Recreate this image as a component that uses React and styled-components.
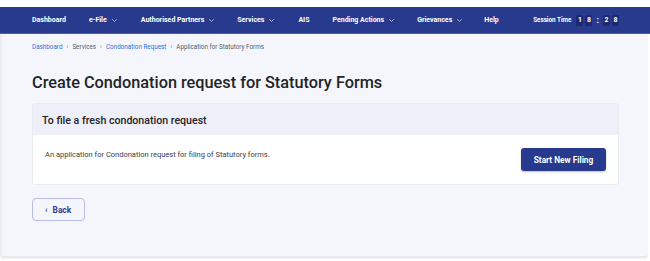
import styled, { createGlobalStyle } from 'styled-components';

const GlobalStyle = createGlobalStyle`
    html, body {
        margin: 0;
        padding: 0;
        background: #ffffff;
        font-family: Roboto, "Noto Sans", Arial, sans-serif;
    }
    * {
        box-sizing: border-box;
    }
`;

const Page = styled.div`
    width: 650px;
    height: 261px;
    padding-top: 7px;
    background: #ffffff;
    overflow: hidden;
`;

const NavBar = styled.nav`
    display: flex;
    align-items: center;
    height: 27px;
    padding: 0 31px 0 32px;
    background: #283a8e;
    border-bottom: 1px solid #4d5ba3;
`;

const NavItem = styled.span`
    display: flex;
    align-items: center;
    gap: 5px;
    margin-right: ${(p) => p.gap}px;
    color: #ffffff;
    font-size: 7px;
    font-weight: 700;
    white-space: nowrap;
`;

const Caret = styled.svg`
    width: 5px;
    height: 3px;
    opacity: 0.75;
`;

const Session = styled.div`
    display: flex;
    align-items: center;
    gap: 2px;
    margin-left: auto;
    color: #ffffff;
    font-size: 6.3px;
    font-weight: 700;
`;

const SessionLabel = styled.span`
    margin-right: 3px;
`;

const Digit = styled.span`
    display: inline-flex;
    align-items: center;
    justify-content: center;
    width: 7px;
    height: 11px;
    background: #1d2a73;
    border-radius: 1px;
    font-size: 7px;
`;

const Colon = styled.span`
    padding: 0 2px;
    font-size: 9px;
    line-height: 9px;
`;

const Content = styled.main`
    height: 224px;
    margin-right: 2px;
    padding: 8px 30px 0 32px;
    background: #f5f6fb;
    border-left: 2px solid #eceef4;
    border-bottom: 2px solid #e6e8ef;
    border-bottom-left-radius: 4px;
    border-bottom-right-radius: 4px;
    box-shadow: 0 1px 2px rgba(0, 0, 0, 0.06);
`;

const Crumbs = styled.div`
    display: flex;
    align-items: center;
    gap: 3px;
    height: 10px;
    margin-left: -2px;
    font-size: 6.3px;
    color: #555a66;
`;

const CrumbLink = styled.a`
    color: #2f6fd6;
    text-decoration: none;
`;

const Sep = styled.span`
    color: #777;
    padding: 0 1px;
`;

const Title = styled.h1`
    margin: 21px 0 10px -2px;
    font-size: 16.3px;
    line-height: 20px;
    font-weight: 500;
    color: #222428;
`;

const Card = styled.section`
    width: 587px;
    margin-left: -2px;
    border: 1px solid #e9ebf2;
    border-radius: 3px;
    background: #ffffff;
    overflow: hidden;
`;

const CardHead = styled.div`
    display: flex;
    align-items: center;
    height: 31px;
    padding: 1px 9px 0;
    background: #eeeff8;
    font-size: 10.6px;
    font-weight: 500;
    color: #222428;
`;

const CardBody = styled.div`
    display: flex;
    align-items: center;
    justify-content: space-between;
    height: 49px;
    padding: 0 12px 0 12px;
`;

const Desc = styled.p`
    margin: 0 0 10px;
    font-size: 7.5px;
    color: #3a3d46;
`;

const PrimaryButton = styled.button`
    width: 85px;
    height: 23px;
    border: none;
    border-radius: 3px;
    background: #283a8e;
    color: #ffffff;
    font-family: inherit;
    font-size: 8.3px;
    font-weight: 700;
    box-shadow: 0 1px 2px rgba(0, 0, 0, 0.25);
`;

const BackButton = styled.button`
    display: flex;
    align-items: center;
    gap: 5px;
    width: 53px;
    height: 23px;
    margin: 13px 0 0 -2px;
    padding: 0 0 0 12px;
    border: 1px solid #b7bde4;
    border-radius: 4px;
    background: transparent;
    color: #2f3c8f;
    font-family: inherit;
    font-size: 8.3px;
    font-weight: 700;
`;

const navItems = [
    { label: 'Dashboard', gap: 23 },
    { label: 'e-File', caret: true, gap: 24 },
    { label: 'Authorised Partners', caret: true, gap: 23 },
    { label: 'Services', caret: true, gap: 24 },
    { label: 'AIS', gap: 23 },
    { label: 'Pending Actions', caret: true, gap: 23 },
    { label: 'Grievances', caret: true, gap: 22 },
    { label: 'Help', gap: 0 },
];

function ChevronDown() {
    return (
        <Caret viewBox="0 0 10 6" fill="none">
            <path d="M1 1l4 4 4-4" stroke="#ffffff" strokeWidth="1.6" strokeLinecap="round" strokeLinejoin="round" />
        </Caret>
    );
}

export default function App() {
    return (
        <Page>
            <GlobalStyle />
            <NavBar>
                {navItems.map((item) => (
                    <NavItem key={item.label} gap={item.gap}>
                        {item.label}
                        {item.caret && <ChevronDown />}
                    </NavItem>
                ))}
                <Session>
                    <SessionLabel>Session Time</SessionLabel>
                    <Digit>1</Digit>
                    <Digit>8</Digit>
                    <Colon>:</Colon>
                    <Digit>2</Digit>
                    <Digit>8</Digit>
                </Session>
            </NavBar>
            <Content>
                <Crumbs>
                    <CrumbLink href="#">Dashboard</CrumbLink>
                    <Sep>›</Sep>
                    <span>Services</span>
                    <Sep>›</Sep>
                    <CrumbLink href="#">Condonation Request</CrumbLink>
                    <Sep>›</Sep>
                    <span>Application for Statutory Forms</span>
                </Crumbs>
                <Title>Create Condonation request for Statutory Forms</Title>
                <Card>
                    <CardHead>To file a fresh condonation request</CardHead>
                    <CardBody>
                        <Desc>An application for Condonation request for filing of Statutory forms.</Desc>
                        <PrimaryButton>Start New Filing</PrimaryButton>
                    </CardBody>
                </Card>
                <BackButton>
                    <span>‹</span>
                    Back
                </BackButton>
            </Content>
        </Page>
    );
}
